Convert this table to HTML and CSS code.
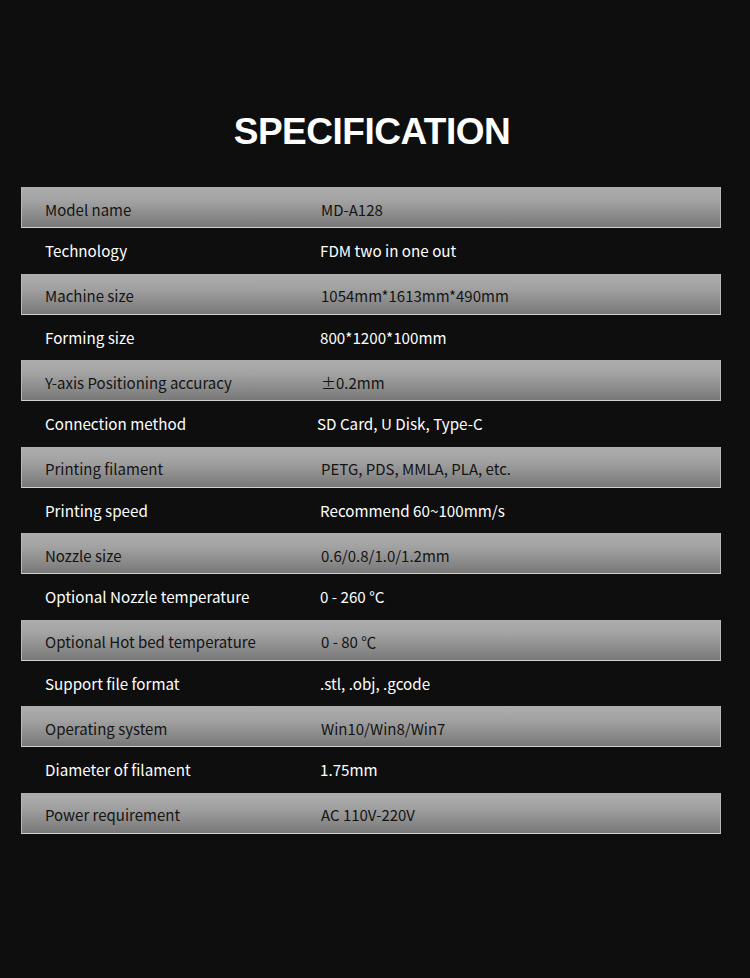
FILE: index.html
```html
<!DOCTYPE html>
<html>
<head>
<meta charset="utf-8">
<link rel="stylesheet" href="styles.css">
</head>
<body>
<div class="page">
  <h1 class="title">SPECIFICATION</h1>
  <div class="table">
    <div class="row bar"><span class="k">Model name</span><span class="v">MD-A128</span></div>
    <div class="row dark"><span class="k">Technology</span><span class="v">FDM two in one out</span></div>
    <div class="row bar"><span class="k">Machine size</span><span class="v">1054mm*1613mm*490mm</span></div>
    <div class="row dark"><span class="k">Forming size</span><span class="v">800*1200*100mm</span></div>
    <div class="row bar"><span class="k">Y-axis Positioning accuracy</span><span class="v">±0.2mm</span></div>
    <div class="row dark"><span class="k">Connection method</span><span class="v shift">SD Card, U Disk, Type-C</span></div>
    <div class="row bar"><span class="k">Printing filament</span><span class="v">PETG, PDS, MMLA, PLA, etc.</span></div>
    <div class="row dark"><span class="k">Printing speed</span><span class="v">Recommend 60~100mm/s</span></div>
    <div class="row bar"><span class="k">Nozzle size</span><span class="v">0.6/0.8/1.0/1.2mm</span></div>
    <div class="row dark"><span class="k">Optional Nozzle temperature</span><span class="v">0 - 260 °C</span></div>
    <div class="row bar"><span class="k">Optional Hot bed temperature</span><span class="v">0 - 80 ℃</span></div>
    <div class="row dark"><span class="k">Support file format</span><span class="v">.stl, .obj, .gcode</span></div>
    <div class="row bar"><span class="k">Operating system</span><span class="v">Win10/Win8/Win7</span></div>
    <div class="row dark"><span class="k">Diameter of filament</span><span class="v">1.75mm</span></div>
    <div class="row bar"><span class="k">Power requirement</span><span class="v">AC 110V-220V</span></div>
  </div>
</div>
</body>
</html>
```

FILE: styles.css
```css
html, body {
  margin: 0;
  padding: 0;
  background: #0e0e0e;
}
.page {
  width: 750px;
  height: 978px;
  padding-top: 109px;
  box-sizing: border-box;
}
.title {
  margin: 0 0 0 -6px;
  text-align: center;
  font-family: "Liberation Sans", Arial, sans-serif;
  font-weight: bold;
  font-size: 37px;
  letter-spacing: -0.5px;
  line-height: 46px;
  color: #ffffff;
}
.table {
  margin: 32px 0 0 21px;
  width: 700px;
  display: flex;
  flex-direction: column;
}
.row {
  display: flex;
  align-items: center;
  font-family: "Noto Sans CJK SC", "Noto Sans", sans-serif;
  font-size: 15px;
  box-sizing: border-box;
}
.k {
  width: 275px;
  padding-left: 24px;
  box-sizing: border-box;
  flex: none;
}
.v {
  flex: 1;
  padding-left: 24px;
}
.v.shift {
  margin-left: -3px;
}
.bar {
  height: 41px;
  background: linear-gradient(to bottom, #adadad 0%, #a2a2a2 35%, #787878 100%);
  border: 1px solid #b8b8b8;
  border-top: none;
  border-bottom-color: #d0d0d0;
  color: #141414;
  font-weight: 400;
  padding-top: 4px;
}
.bar .k {
  padding-left: 23px;
}
.bar .v {
  padding-left: 24px;
}
.dark {
  height: 45.5px;
  color: #ffffff;
  font-weight: 400;
  font-size: 15.2px;
  padding-bottom: 1px;
}
```
